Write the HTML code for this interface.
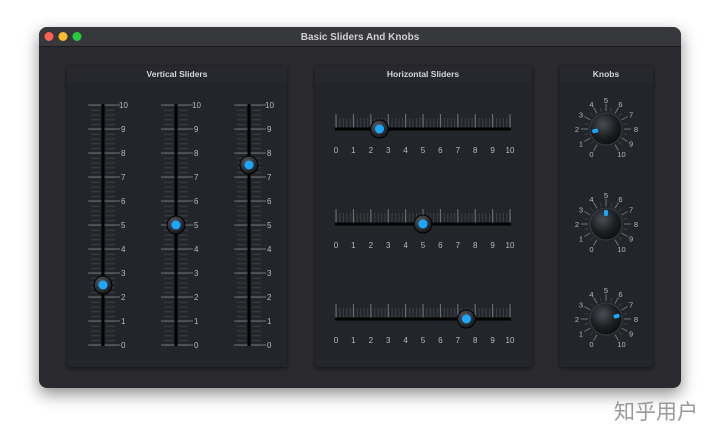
<!DOCTYPE html>
<html><head><meta charset="utf-8"><style>
body{margin:0;width:720px;height:440px;background:#fff;overflow:hidden;font-family:"Liberation Sans",sans-serif}
svg text{font-family:"Liberation Sans",sans-serif}
</style></head><body>
<svg width="720" height="440" viewBox="0 0 720 440" xmlns="http://www.w3.org/2000/svg">
<defs>
<filter id="sh" x="-10%" y="-10%" width="120%" height="130%"><feDropShadow dx="0" dy="6" stdDeviation="8" flood-color="#000" flood-opacity="0.45"/></filter>
<filter id="ps" x="-10%" y="-10%" width="120%" height="120%"><feDropShadow dx="0" dy="1" stdDeviation="2" flood-color="#000" flood-opacity="0.6"/></filter>
<pattern id="vm" width="20" height="4.8" patternUnits="userSpaceOnUse" y="105"><rect x="0" y="0" width="20" height="0.8" fill="#42464c"/></pattern>
<pattern id="vM" width="40" height="24" patternUnits="userSpaceOnUse" y="104.5"><rect x="0" y="0" width="40" height="1" fill="#70747a"/></pattern>
<pattern id="hm" width="3.48" height="20" patternUnits="userSpaceOnUse" x="336"><rect width="0.8" height="20" fill="#42464c"/></pattern>
<pattern id="hM" width="17.4" height="20" patternUnits="userSpaceOnUse" x="335.5"><rect width="1" height="20" fill="#70747a"/></pattern>
<radialGradient id="kn" cx="40%" cy="35%" r="70%"><stop offset="0" stop-color="#4a4e54"/><stop offset="0.6" stop-color="#1c1e21"/><stop offset="1" stop-color="#0d0e10"/></radialGradient>
<radialGradient id="hd" cx="40%" cy="35%" r="70%"><stop offset="0" stop-color="#5a5e64"/><stop offset="1" stop-color="#101114"/></radialGradient>
<g id="vs"><rect x="-12" y="105" width="9" height="241" fill="url(#vm)"/><rect x="3" y="105" width="9" height="241" fill="url(#vm)"/><rect x="-15" y="104.5" width="32" height="242" fill="url(#vM)"/><rect x="-1.5" y="104" width="3" height="242" fill="#000"/></g>
<g id="hs"><rect x="336" y="118" width="175" height="10" fill="url(#hm)"/><rect x="335.5" y="114" width="176" height="14" fill="url(#hM)"/><rect x="335" y="127.5" width="176" height="3" fill="#000"/></g>
<g id="kt"><rect x="-0.5" y="-25" width="1" height="7" fill="#70747a"/></g>
<g id="km"><rect x="-0.4" y="-22" width="0.8" height="4" fill="#42464c"/></g>
<g id="kticks">
<use href="#kt" transform="rotate(-150)"/><use href="#kt" transform="rotate(-120)"/><use href="#kt" transform="rotate(-90)"/><use href="#kt" transform="rotate(-60)"/><use href="#kt" transform="rotate(-30)"/><use href="#kt"/><use href="#kt" transform="rotate(30)"/><use href="#kt" transform="rotate(60)"/><use href="#kt" transform="rotate(90)"/><use href="#kt" transform="rotate(120)"/><use href="#kt" transform="rotate(150)"/>
<use href="#km" transform="rotate(-135)"/><use href="#km" transform="rotate(-105)"/><use href="#km" transform="rotate(-75)"/><use href="#km" transform="rotate(-45)"/><use href="#km" transform="rotate(-15)"/><use href="#km" transform="rotate(15)"/><use href="#km" transform="rotate(45)"/><use href="#km" transform="rotate(75)"/><use href="#km" transform="rotate(105)"/><use href="#km" transform="rotate(135)"/>
<circle r="16.5" fill="#3a3d42"/><circle r="15.5" fill="url(#kn)"/>
</g>
<g id="handle"><circle r="9" fill="url(#hd)" stroke="#000" stroke-width="1"/><circle r="4.5" fill="#1aa7ff"/></g>
</defs>
<rect x="39" y="27" width="642" height="361" rx="8" fill="#2a2b2e" filter="url(#sh)"/>
<path d="M47 27h626a8 8 0 0 1 8 8v11h-642v-11a8 8 0 0 1 8-8z" fill="#37383b"/>
<rect x="39" y="46" width="642" height="1" fill="#1a1a1c"/>
<circle cx="49" cy="36.5" r="4.5" fill="#fe5f57"/><circle cx="63" cy="36.5" r="4.5" fill="#febc2e"/><circle cx="77" cy="36.5" r="4.5" fill="#28c840"/>
<text x="360" y="40" text-anchor="middle" font-size="10" font-weight="bold" fill="#d0d0d2">Basic Sliders And Knobs</text>
<g filter="url(#ps)">
<rect x="67" y="66" width="220" height="301" fill="#23252a"/>
<rect x="315" y="66" width="217" height="301" fill="#23252a"/>
<rect x="560" y="66" width="93" height="301" fill="#23252a"/>
</g>
<rect x="67" y="66" width="220" height="16" fill="#26282d"/>
<rect x="315" y="66" width="217" height="16" fill="#26282d"/>
<rect x="560" y="66" width="93" height="16" fill="#26282d"/>
<g font-size="8.5" font-weight="bold" fill="#d4d6da" text-anchor="middle">
<text x="177" y="77">Vertical Sliders</text><text x="423" y="77">Horizontal Sliders</text><text x="606" y="77">Knobs</text>
</g>
<use href="#vs" transform="translate(103,0)"/><use href="#vs" transform="translate(176,0)"/><use href="#vs" transform="translate(249,0)"/>
<g font-size="8" fill="#b8babd">
<g transform="translate(119,0)"><text x="0" y="108">10</text><text x="2" y="132">9</text><text x="2" y="156">8</text><text x="2" y="180">7</text><text x="2" y="204">6</text><text x="2" y="228">5</text><text x="2" y="252">4</text><text x="2" y="276">3</text><text x="2" y="300">2</text><text x="2" y="324">1</text><text x="2" y="348">0</text></g>
<g transform="translate(192,0)"><text x="0" y="108">10</text><text x="2" y="132">9</text><text x="2" y="156">8</text><text x="2" y="180">7</text><text x="2" y="204">6</text><text x="2" y="228">5</text><text x="2" y="252">4</text><text x="2" y="276">3</text><text x="2" y="300">2</text><text x="2" y="324">1</text><text x="2" y="348">0</text></g>
<g transform="translate(265,0)"><text x="0" y="108">10</text><text x="2" y="132">9</text><text x="2" y="156">8</text><text x="2" y="180">7</text><text x="2" y="204">6</text><text x="2" y="228">5</text><text x="2" y="252">4</text><text x="2" y="276">3</text><text x="2" y="300">2</text><text x="2" y="324">1</text><text x="2" y="348">0</text></g>
</g>
<use href="#handle" transform="translate(103,285)"/><use href="#handle" transform="translate(176,225)"/><use href="#handle" transform="translate(249,165)"/>
<use href="#hs"/><use href="#hs" transform="translate(0,95)"/><use href="#hs" transform="translate(0,190)"/>
<g font-size="8" fill="#b8babd" text-anchor="middle">
<text x="336" y="153">0</text><text x="353.4" y="153">1</text><text x="370.8" y="153">2</text><text x="388.2" y="153">3</text><text x="405.6" y="153">4</text><text x="423" y="153">5</text><text x="440.4" y="153">6</text><text x="457.8" y="153">7</text><text x="475.2" y="153">8</text><text x="492.6" y="153">9</text><text x="510" y="153">10</text>
</g>
<g font-size="8" fill="#b8babd" text-anchor="middle" transform="translate(0,95)">
<text x="336" y="153">0</text><text x="353.4" y="153">1</text><text x="370.8" y="153">2</text><text x="388.2" y="153">3</text><text x="405.6" y="153">4</text><text x="423" y="153">5</text><text x="440.4" y="153">6</text><text x="457.8" y="153">7</text><text x="475.2" y="153">8</text><text x="492.6" y="153">9</text><text x="510" y="153">10</text>
</g>
<g font-size="8" fill="#b8babd" text-anchor="middle" transform="translate(0,190)">
<text x="336" y="153">0</text><text x="353.4" y="153">1</text><text x="370.8" y="153">2</text><text x="388.2" y="153">3</text><text x="405.6" y="153">4</text><text x="423" y="153">5</text><text x="440.4" y="153">6</text><text x="457.8" y="153">7</text><text x="475.2" y="153">8</text><text x="492.6" y="153">9</text><text x="510" y="153">10</text>
</g>
<use href="#handle" transform="translate(379.5,129)"/><use href="#handle" transform="translate(423,224)"/><use href="#handle" transform="translate(466.5,319)"/>
<g transform="translate(606,129)"><use href="#kticks"/><rect x="-2" y="-14" width="4" height="6" rx="1.5" fill="#1aa7ff" transform="rotate(-100)"/></g>
<g transform="translate(606,224)"><use href="#kticks"/><rect x="-2" y="-14" width="4" height="6" rx="1.5" fill="#1aa7ff"/></g>
<g transform="translate(606,319)"><use href="#kticks"/><rect x="-2" y="-14" width="4" height="6" rx="1.5" fill="#1aa7ff" transform="rotate(75)"/></g>
<g font-size="7.5" fill="#b8babd" text-anchor="middle">
<g><text x="591.5" y="157">0</text><text x="580.9" y="146.5">1</text><text x="577" y="132">2</text><text x="580.9" y="117.5">3</text><text x="591.5" y="107">4</text><text x="606" y="103">5</text><text x="620.5" y="107">6</text><text x="631.1" y="117.5">7</text><text x="636" y="132">8</text><text x="631.1" y="146.5">9</text><text x="621.5" y="157">10</text></g>
<g transform="translate(0,95)"><text x="591.5" y="157">0</text><text x="580.9" y="146.5">1</text><text x="577" y="132">2</text><text x="580.9" y="117.5">3</text><text x="591.5" y="107">4</text><text x="606" y="103">5</text><text x="620.5" y="107">6</text><text x="631.1" y="117.5">7</text><text x="636" y="132">8</text><text x="631.1" y="146.5">9</text><text x="621.5" y="157">10</text></g>
<g transform="translate(0,190)"><text x="591.5" y="157">0</text><text x="580.9" y="146.5">1</text><text x="577" y="132">2</text><text x="580.9" y="117.5">3</text><text x="591.5" y="107">4</text><text x="606" y="103">5</text><text x="620.5" y="107">6</text><text x="631.1" y="117.5">7</text><text x="636" y="132">8</text><text x="631.1" y="146.5">9</text><text x="621.5" y="157">10</text></g>
</g>
<text x="656" y="419" text-anchor="middle" font-size="21" fill="#9a9a9a" style="font-family:'Noto Sans CJK SC',sans-serif">知乎用户</text>
</svg>
</body></html>
